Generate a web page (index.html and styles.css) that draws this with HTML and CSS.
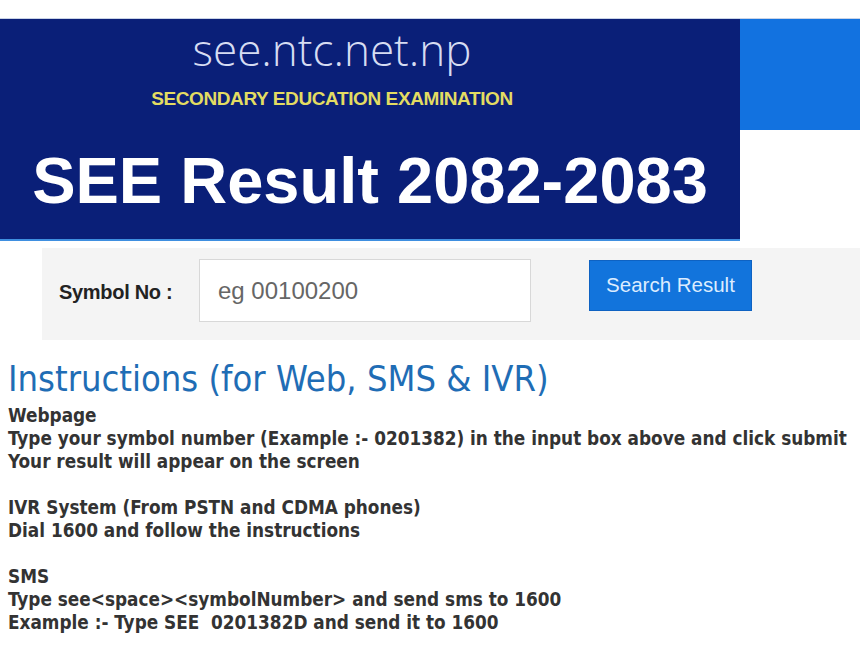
FILE: index.html
```html
<!DOCTYPE html>
<html lang="en">
  <head>
    <meta charset="UTF-8" name="viewport" content="width=device-width, initial-scale=1">
    <title>SEE Result 2082-2083</title>
    <link rel="stylesheet" href="styles.css">
  </head>
  <body>
    <div class="header">
      <div class="banner">
        <div class="site_name">see.ntc.net.np</div>
        <div class="exam_name">SECONDARY EDUCATION EXAMINATION</div>
        <h1 class="result_title">SEE Result 2082-2083</h1>
      </div>
      <div class="side">
        <div class="side_block"></div>
      </div>
    </div>
    <form class="search_panel" onsubmit="return false;">
      <label class="symbol_label" for="symbol">Symbol No :</label>
      <input class="symbol_input" type="text" id="symbol" placeholder="eg 00100200">
      <button type="submit" class="search_button">Search Result</button>
    </form>
    <div class="instructions">
      <h2>Instructions (for Web, SMS &amp; IVR)</h2>
      <p>Webpage<br>Type your symbol number (Example :- 0201382) in the input box above and click submit<br>Your result will appear on the screen</p>
      <p>IVR System (From PSTN and CDMA phones)<br>Dial 1600 and follow the instructions</p>
      <p>SMS<br>Type see&lt;space&gt;&lt;symbolNumber&gt; and send sms to 1600<br>Example :- Type SEE &nbsp;0201382D and send it to 1600</p>
    </div>
  </body>
</html>
```

FILE: styles.css
```css
body {
  margin: 0;
  padding-top: 18px;
  background-color: #ffffff;
  font-family: "Liberation Sans", Arial, sans-serif;
}

/* 顶部 横幅 */
.header {
  display: flex;
  border-top: 1px solid #c9d3e6;
}

.banner {
  width: 740px;
  height: 220px;
  background-color: #0a1f78;
  border-bottom: 2px solid #3f8fe0;
  text-align: center;
  color: #ffffff;
}

.site_name {
  margin: 5px 76px 0 0;
  font-family: "Open Sans", "Liberation Sans", sans-serif;
  font-weight: 300;
  font-size: 44px;
  line-height: 50px;
  color: #d6dcf2;
}

.exam_name {
  margin: 13px 76px 0 0;
  font-family: "Liberation Sans", sans-serif;
  font-weight: bold;
  font-size: 19px;
  line-height: 24px;
  letter-spacing: -0.4px;
  color: #e3dc62;
}

.result_title {
  margin: 35px 0 0 0;
  font-family: "Liberation Sans", Arial, sans-serif;
  font-weight: bold;
  font-size: 65px;
  line-height: 70px;
}

.side {
  flex: 1;
}

.side_block {
  height: 111px;
  background-color: #1272e0;
}

/* 搜索 区域 */
.search_panel {
  display: flex;
  align-items: center;
  height: 92px;
  margin: 7px 0 0 42px;
  padding-left: 17px;
  background-color: #f4f4f4;
}

.symbol_label {
  width: 140px;
  margin-top: -3px;
  font-weight: bold;
  font-size: 20px;
  letter-spacing: -0.3px;
  color: #222222;
}

.symbol_input {
  width: 312px;
  height: 61px;
  margin-top: -7px;
  padding: 0 0 0 18px;
  border: 1px solid #d8d8d8;
  background-color: #ffffff;
  font-family: "Liberation Sans", sans-serif;
  font-size: 24px;
}

.symbol_input::placeholder {
  color: #666666;
}

.search_button {
  width: 163px;
  height: 51px;
  margin: -18px 0 0 58px;
  border: 1px solid #0e62c2;
  background-color: #1274dc;
  color: #dcecff;
  font-family: "Liberation Sans", sans-serif;
  font-size: 20.5px;
  cursor: pointer;
}

/* 说明 文字 */
.instructions {
  padding: 0 8px;
  font-family: "DejaVu Sans Condensed", "DejaVu Sans", sans-serif;
  color: #333333;
}

.instructions h2 {
  margin: 17px 0 3px 0;
  font-weight: normal;
  font-size: 36px;
  line-height: 44px;
  color: #1f6db5;
}

.instructions p {
  margin: 0 0 23px 0;
  font-weight: bold;
  font-size: 18.8px;
  line-height: 23px;
}
```
